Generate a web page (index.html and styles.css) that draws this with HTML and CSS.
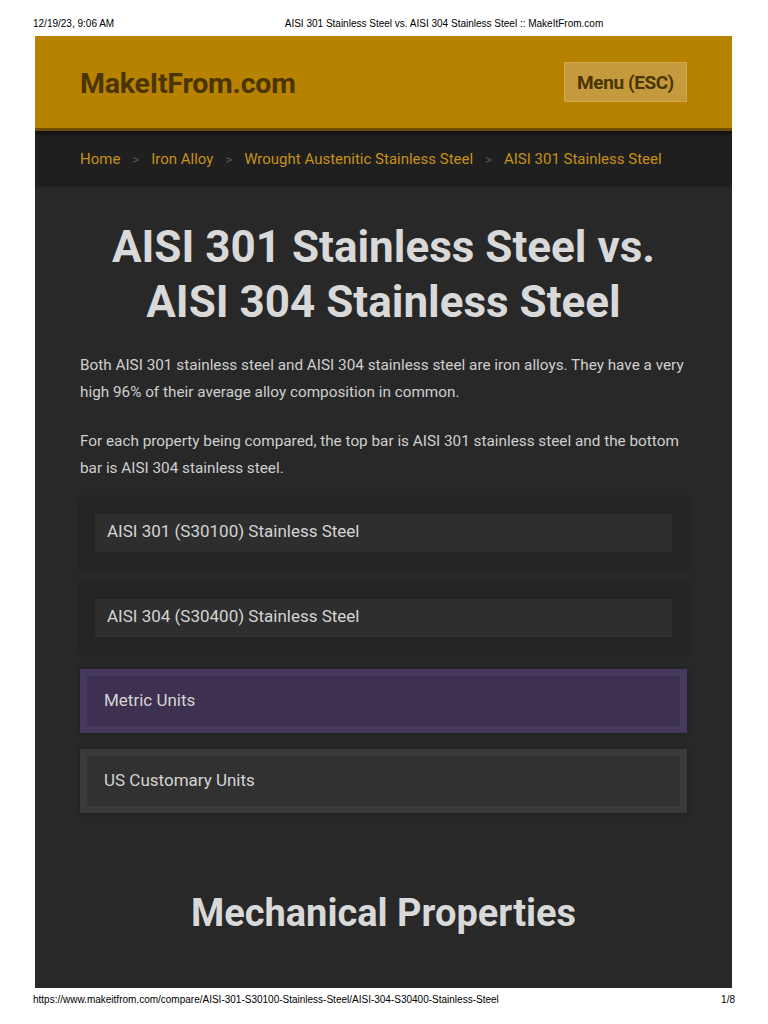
FILE: index.html
```
<!DOCTYPE html>
<html>
<head>
<meta charset="utf-8">
<title>AISI 301 Stainless Steel vs. AISI 304 Stainless Steel :: MakeItFrom.com</title>
<link rel="stylesheet" href="styles.css">
</head>
<body>
<div class="print-head">
  <span class="ph-date">12/19/23, 9:06 AM</span>
  <span class="ph-title">AISI 301 Stainless Steel vs. AISI 304 Stainless Steel :: MakeItFrom.com</span>
</div>
<div class="page">
  <header class="site-head">
    <a class="logo">MakeItFrom.com</a>
    <a class="menu-btn">Menu (ESC)</a>
  </header>
  <nav class="crumbs">
    <a>Home</a><span class="sep">&gt;</span><a>Iron Alloy</a><span class="sep">&gt;</span><a>Wrought Austenitic Stainless Steel</a><span class="sep">&gt;</span><a>AISI 301 Stainless Steel</a>
  </nav>
  <main class="content">
    <h1>AISI 301 Stainless Steel vs.<br>AISI 304 Stainless Steel</h1>
    <p>Both AISI 301 stainless steel and AISI 304 stainless steel are iron alloys. They have a very high 96% of their average alloy composition in common.</p>
    <p>For each property being compared, the top bar is AISI 301 stainless steel and the bottom bar is AISI 304 stainless steel.</p>
    <div class="mat-box"><div class="mat-inner">AISI 301 (S30100) Stainless Steel</div></div>
    <div class="mat-box"><div class="mat-inner">AISI 304 (S30400) Stainless Steel</div></div>
    <div class="unit-box unit-active"><div class="unit-inner">Metric Units</div></div>
    <div class="unit-box"><div class="unit-inner">US Customary Units</div></div>
    <h2>Mechanical Properties</h2>
  </main>
</div>
<div class="print-foot">
  <span>https://www.makeitfrom.com/compare/AISI-301-S30100-Stainless-Steel/AISI-304-S30400-Stainless-Steel</span>
  <span>1/8</span>
</div>
</body>
</html>
```
FILE: styles.css
```
html, body {
  margin: 0;
  padding: 0;
  background: #ffffff;
}
body {
  width: 768px;
  height: 1024px;
  overflow: hidden;
  font-family: "Liberation Sans", Arial, sans-serif;
}
.print-head {
  height: 36px;
  position: relative;
  font-size: 10px;
  color: #000;
}
.ph-date {
  position: absolute;
  left: 33px;
  top: 18px;
}
.ph-title {
  position: absolute;
  left: 0;
  right: 0;
  top: 18px;
  text-align: center;
  padding-left: 120px;
}
.page {
  margin: 0 36px 0 35px;
  height: 952px;
  background: #282828;
  font-family: Roboto, "Open Sans", sans-serif;
  overflow: hidden;
}
.site-head {
  height: 92px;
  background: #b78200;
  display: flex;
  align-items: center;
  justify-content: space-between;
  padding: 0 45px;
  box-shadow: 0 3px 3px rgba(0,0,0,0.45);
  border-bottom: 3px solid #6e4e00;
  position: relative;
}
.logo {
  font-size: 28.5px;
  font-weight: 700;
  color: #4a3400;
  letter-spacing: -0.2px;
  margin-top: 2px;
}
.menu-btn {
  font-size: 19px;
  font-weight: 700;
  color: #4a3400;
  background: #c49a3c;
  border: 1px solid #cfa850;
  height: 38px;
  width: 121px;
  display: flex;
  align-items: center;
  justify-content: center;
  letter-spacing: -0.4px;
}
.crumbs {
  height: 56px;
  background: #1f1f1f;
  display: flex;
  align-items: center;
  padding: 0 45px;
  font-size: 15px;
  color: #c59118;
}
.crumbs .sep {
  color: #5a5a5a;
  font-size: 13px;
  margin: 0 12px;
}
.content {
  padding: 33px 45px 0;
}
h1 {
  margin: 0;
  text-align: center;
  font-size: 44px;
  line-height: 55px;
  font-weight: 700;
  color: #d9d9d9;
  letter-spacing: 0;
}
p {
  margin: 22px 0 0;
  font-size: 15.3px;
  line-height: 27px;
  color: #cfcfcf;
}
p + p {
  margin-top: 22px;
}
.mat-box {
  background: #242424;
  padding: 16px 15px 17px;
  margin-top: 14px;
  box-shadow: 0 0 4px rgba(0,0,0,0.35);
}
.content p + .mat-box {
  margin-top: 16px;
}
.mat-inner {
  background: #2e2e2e;
  height: 38px;
  display: flex;
  align-items: center;
  padding-left: 12px;
  padding-bottom: 4px;
  box-sizing: border-box;
  font-size: 17px;
  color: #d4d4d4;
}
.unit-box {
  background: #3a3a3a;
  padding: 7px;
  margin-top: 16px;
  box-shadow: 0 0 4px rgba(0,0,0,0.35);
}
.unit-inner {
  background: #313131;
  height: 50px;
  display: flex;
  align-items: center;
  padding-left: 17px;
  padding-bottom: 2px;
  box-sizing: border-box;
  font-size: 17px;
  color: #d4d4d4;
}
.unit-active {
  background: #46395e;
  margin-top: 15px;
}
.unit-active .unit-inner {
  background: #3d3050;
}
h2 {
  margin: 78px 0 0;
  text-align: center;
  font-size: 38px;
  font-weight: 700;
  color: #d9d9d9;
  letter-spacing: 0;
}
.print-foot {
  position: relative;
  display: flex;
  justify-content: space-between;
  padding: 6px 33px 0 33px;
  font-size: 10px;
  color: #000;
}
```
